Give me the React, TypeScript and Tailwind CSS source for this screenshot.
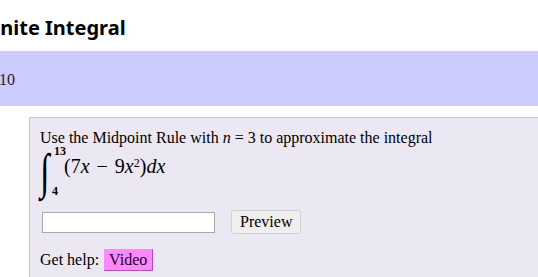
import React from 'react'

const serif = { fontFamily: '"Liberation Serif", "Times New Roman", serif' }

const App: React.FC = () => {
  return (
    <div className="w-[538px] h-[277px] overflow-hidden bg-white" style={serif}>
      {/* Title, scrolled off to the left */}
      <div className="h-[51px] overflow-hidden">
        <h1
          className="ml-[-40px] pt-[15px] text-[20px] font-bold leading-[26px] text-black whitespace-nowrap"
          style={{ fontFamily: '"Noto Sans", "DejaVu Sans", sans-serif' }}
        >
          Definite Integral
        </h1>
      </div>

      {/* Points band */}
      <div className="h-[55px] bg-[#ccccff] flex items-center text-[16px] text-[#222]">
        <span className="ml-[-1px] mt-[2px]">10</span>
      </div>

      {/* Question box */}
      <div className="mt-[11px] ml-[29px] border-t border-l border-[#c4c2cc] bg-[#ebe7f3] pl-[10px] pt-[10px] h-[200px] text-[16px] text-black">
        <p className="leading-[19px]">
          Use the Midpoint Rule with <i>n</i> = 3 to approximate the integral
        </p>

        {/* Integral */}
        <div className="flex items-start h-[54px] mt-[1px]">
          <div className="relative w-[22px] h-[54px]">
            <span className="absolute left-[0px] top-[-5px] text-[34px] leading-[40px] italic origin-top scale-y-[1.45] inline-block">∫</span>
            <span className="absolute left-[14px] top-[-3px] text-[12px] font-semibold leading-none">13</span>
            <span className="absolute left-[12px] top-[37px] text-[12px] font-semibold leading-none">4</span>
          </div>
          <span className="ml-[2px] mt-[6px] text-[20px] leading-[24px] whitespace-nowrap">
            (7<i>x</i><span className="mx-[7px]">−</span>9<i>x</i><sup className="text-[12px]">2</sup>)<i>dx</i>
          </span>
        </div>

        {/* Answer */}
        <div className="flex items-center mt-[8px]">
          <input
            type="text"
            className="ml-[2px] w-[173px] h-[21px] bg-white border border-[#a9a9a9] outline-none"
          />
          <button
            className="ml-[16px] h-[24px] px-[8px] bg-[#efefef] border border-[#d0d0d0] rounded-[3px] text-[16px] leading-none text-black"
            style={serif}
          >
            Preview
          </button>
        </div>

        {/* Help */}
        <div className="flex items-center mt-[14px]">
          <span>Get help:</span>
          <span className="ml-[5px] h-[22px] px-[5px] flex items-center bg-[#ff88ff] border-r border-b border-[#b050b0] text-[#220022]">
            Video
          </span>
        </div>
      </div>
    </div>
  )
}

export default App
